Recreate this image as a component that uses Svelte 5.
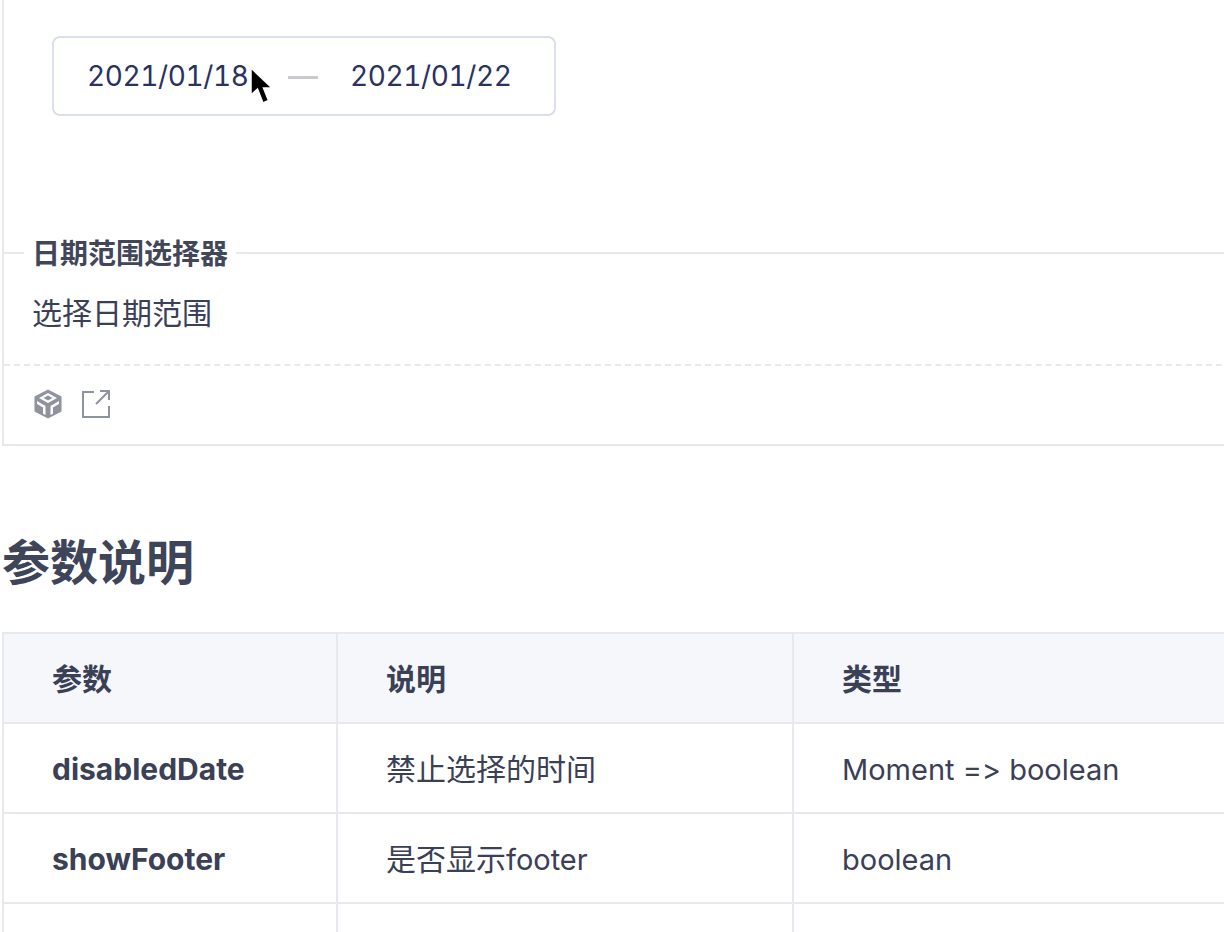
<script>
  const rows = [
    { name: 'disabledDate', cn: '禁止选择的时间', en: '', type: 'Moment => boolean' },
    { name: 'showFooter', cn: '是否显示', en: 'footer', type: 'boolean' },
    { name: '\u00a0', cn: '\u00a0', en: '', type: '\u00a0' }
  ];
</script>

<div class="page">
  <section class="demo">
    <div class="preview">
      <div class="picker">
        <span class="date">2021/01/18</span>
        <span class="dash"></span>
        <span class="date">2021/01/22</span>
        <svg class="cursor" width="26" height="40" viewBox="0 0 26 40">
          <path d="M2 1 L2 28 L8.500 22 L14 36 L19.500 33.500 L14.500 21 L23 21 Z" fill="#000" stroke="#fff" stroke-width="1.500" />
        </svg>
      </div>
    </div>
    <div class="meta">
      <div class="title">日期范围选择器</div>
      <p class="desc">选择日期范围</p>
    </div>
    <div class="actions">
      <svg width="30" height="30" viewBox="0 0 30 30">
        <path d="M15 0.500 L28.500 7.500 V22.500 L15 29.500 L1.500 22.500 V7.500 Z" fill="#8f929f" />
        <path d="M15 4 L24 9 L15 14 L6 9 Z" fill="#fff" />
        <path d="M15 6.500 L19.500 9 L15 11.500 L10.500 9 Z" fill="#8f929f" />
        <path d="M4 12 L12.500 17 V26 L10 24.700 V18.500 L4 15 Z M26 12 L17.500 17 V26 L20 24.700 V18.500 L26 15 Z" fill="#fff" />
      </svg>
      <svg width="30" height="30" viewBox="0 0 30 30" fill="none" stroke="#8f929f" stroke-width="2">
        <path d="M13 3 H2 V28 H28 V17" />
        <path d="M15 15 L28 2 M19 2 H28 V11" />
      </svg>
    </div>
  </section>

  <h2>参数说明</h2>

  <table>
    <colgroup>
      <col class="c1" />
      <col class="c2" />
      <col class="c3" />
    </colgroup>
    <thead>
      <tr><th>参数</th><th>说明</th><th>类型</th></tr>
    </thead>
    <tbody>
      {#each rows as row}
        <tr>
          <td class="name"><span class="cell">{row.name}</span></td>
          <td><span class="cell">{row.cn}<span class="latin">{row.en}</span></span></td>
          <td><span class="cell latin">{row.type}</span></td>
        </tr>
      {/each}
    </tbody>
  </table>
</div>

<style>
  :global(body) {
    margin: 0;
    background: #fff;
    overflow: hidden;
  }
  .page {
    width: 1224px;
    height: 932px;
    overflow: hidden;
    padding-left: 2px;
    box-sizing: border-box;
    color: #3a4056;
    font-family: Inter, "Noto Sans CJK SC", sans-serif;
    font-variant-ligatures: none;
    font-feature-settings: "calt" 0;
  }
  .demo {
    width: 1300px;
    box-sizing: border-box;
    border-left: 2px solid #e8e9ef;
    border-bottom: 2px solid #e8e9ef;
    height: 446px;
  }
  .preview {
    height: 252px;
    box-sizing: border-box;
    padding: 36px 0 0 48px;
  }
  .picker {
    position: relative;
    width: 504px;
    height: 80px;
    box-sizing: border-box;
    border: 2px solid #dcdfec;
    border-radius: 8px;
    display: flex;
    align-items: center;
    padding-left: 33px;
    color: #2a3163;
    font-size: 28px;
    letter-spacing: -0.4px;
    font-feature-settings: "calt" 0, "tnum" 1;
  }
  .date { width: 160px; white-space: nowrap; }
  .dash {
    width: 30px;
    height: 3px;
    margin: 2px 32px 0 41px;
    background: #c9cacd;
  }
  .cursor {
    position: absolute;
    left: 195px;
    top: 29px;
  }
  .meta {
    position: relative;
    border-top: 2px solid #e8e9ef;
    height: 112px;
    box-sizing: border-box;
  }
  .title {
    position: absolute;
    left: 20px;
    top: -19px;
    padding: 0 8px;
    background: #fff;
    font-size: 28px;
    font-weight: 600;
    line-height: 38px;
    color: #414759;
  }
  .desc {
    margin: 0;
    padding: 37px 0 0 28px;
    font-size: 30px;
    line-height: 44px;
  }
  .actions {
    border-top: 2px dashed #e8e9ef;
    height: 78px;
    box-sizing: border-box;
    display: flex;
    align-items: center;
    gap: 18px;
    padding-left: 29px;
  }
  h2 {
    margin: 0;
    padding-top: 86px;
    height: 186px;
    box-sizing: border-box;
    font-size: 48px;
    line-height: 62px;
    font-weight: 600;
    color: #3f4559;
  }
  table {
    table-layout: fixed;
    border-collapse: collapse;
    width: 1300px;
    font-size: 30px;
  }
  .c1 { width: 334px; }
  .c2 { width: 456px; }
  th, td {
    border: 2px solid #e8e9ef;
    height: 90px;
    box-sizing: border-box;
    padding: 2px 0 0 48px;
    text-align: left;
    white-space: nowrap;
    line-height: 40px;
    font-weight: 400;
  }
  th {
    background: #f6f7fb;
    font-weight: 600;
    font-size: 30px;
  }
  .name { font-weight: 700; }
  .latin { font-size: 29px; }
</style>
